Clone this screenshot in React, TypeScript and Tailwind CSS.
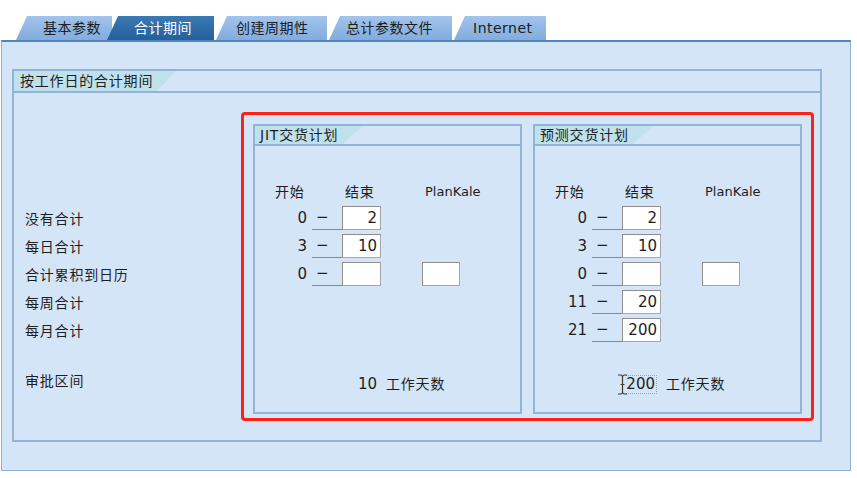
import React from "react";

type Row = { s: string; e: string; pk?: boolean } | null;

const CJK = "text-[14px] tracking-[0.8px]";

function Tab({
  label,
  active,
  cls,
}: {
  label: string;
  active?: boolean;
  cls: string;
}) {
  return (
    <div
      className={
        "h-[24px] flex items-center text-[14px] tracking-[0.5px] whitespace-nowrap [clip-path:polygon(11px_0,100%_0,100%_100%,0_100%)] " +
        (active
          ? "bg-gradient-to-b from-[#3b79b5] to-[#24609b] text-white "
          : "bg-gradient-to-b from-[#a2c4ec] to-[#82acdd] text-[#1c1c1c] ") +
        cls
      }
    >
      {label}
    </div>
  );
}

function Cell({ v, w }: { v: string; w: string }) {
  return (
    <div
      className={
        "h-[24px] bg-white border border-[#a6a6a6] border-t-[#8e8e8e] border-l-[#8e8e8e] flex items-center justify-end pr-[3px] text-[15px] " +
        w
      }
    >
      {v}
    </div>
  );
}

function SubBox({
  title,
  labelCls,
  rows,
  bottom,
  focus,
}: {
  title: string;
  labelCls: string;
  rows: Row[];
  bottom: string;
  focus?: boolean;
}) {
  return (
    <div className="w-[269px] h-[290px] border-2 border-[#93b3d9] flex flex-col">
      <div className="h-[20px] border-b-2 border-[#93b3d9] flex">
        <div
          className={
            "h-full bg-[#bfe1eb] flex items-center pl-[5px] " + CJK + " " + labelCls
          }
        >
          {title}
        </div>
      </div>
      <div className="pt-[36px] flex flex-col">
        <div className="h-[20px] flex items-center pl-[20px]">
          <div className={"w-[70px] " + CJK}>开始</div>
          <div className={"w-[80px] " + CJK}>结束</div>
          <div className="text-[13px]">PlanKale</div>
        </div>
        <div className="mt-[4px] flex flex-col gap-[4px]">
          {rows.map((r, i) =>
            r ? (
              <div key={i} className="h-[24px] flex">
                <div className="w-[52px] text-right text-[15px] self-center">
                  {r.s}
                </div>
                <div className="ml-[5px] w-[30px] h-full border-b border-[#8a8a8a] flex items-center pl-[4px] text-[15px]">
                  −
                </div>
                <Cell v={r.e} w="w-[39px]" />
                {r.pk ? (
                  <div className="ml-[41px]">
                    <Cell v="" w="w-[38px]" />
                  </div>
                ) : null}
              </div>
            ) : (
              <div key={i} className="h-[24px]" />
            )
          )}
        </div>
        <div className="mt-[32px] h-[20px] flex items-center relative">
          <div className="w-[122px] flex justify-end text-[15px]">
            {focus ? (
              <span className="border border-dotted border-[#9aa4ae] border-l-transparent leading-[17px] pr-[1px]">
                {bottom}
              </span>
            ) : (
              <span>{bottom}</span>
            )}
          </div>
          <div className={"ml-[9px] " + CJK}>工作天数</div>
          {focus ? (
            <svg
              className="absolute left-[82px] top-[0px]"
              width="11"
              height="21"
              viewBox="0 0 11 21"
            >
              <path
                d="M1 1 H4 M7 1 H10 M4 1 Q5.5 1.5 5.5 3 V18 Q5.5 19.5 4 20 M7 1 Q5.5 1.5 5.5 3 M5.5 18 Q5.5 19.5 7 20 M1 20 H4 M7 20 H10 M3.5 10.5 H7.5"
                stroke="#3b3b3b"
                strokeWidth="1.2"
                fill="none"
              />
            </svg>
          ) : null}
        </div>
      </div>
    </div>
  );
}

export default function App() {
  const jit: Row[] = [
    { s: "0", e: "2" },
    { s: "3", e: "10" },
    { s: "0", e: "", pk: true },
    null,
    null,
  ];
  const fc: Row[] = [
    { s: "0", e: "2" },
    { s: "3", e: "10" },
    { s: "0", e: "", pk: true },
    { s: "11", e: "20" },
    { s: "21", e: "200" },
  ];
  const labels = ["没有合计", "每日合计", "合计累积到日历", "每周合计", "每月合计"];
  return (
    <div className="w-[857px] h-[478px] bg-white text-[#1e1e1e] font-['DejaVu_Sans','Noto_Sans_CJK_SC',sans-serif] overflow-hidden">
      <div className="h-[40px] pt-[16px] pl-[16px] flex items-end">
        <Tab label="基本参数" cls="w-[96px] pl-[27px]" />
        <Tab label="合计期间" active cls="w-[107px] -ml-[5px] pl-[27px]" />
        <Tab label="创建周期性" cls="w-[111px] ml-[2px] pl-[20px]" />
        <Tab label="总计参数文件" cls="w-[123px] ml-[2px] pl-[17px]" />
        <Tab label="Internet" cls="w-[92px] ml-[2px] pl-[19px]" />
      </div>
      <div className="ml-[1px] w-[850px] h-[431px] bg-[#d4e5f7] border-t-2 border-t-[#5184bd] border-x border-b border-x-[#8fb0d8] border-b-[#8fb0d8] pt-[27px] pl-[10px]">
        <div className="w-[810px] h-[373px] border-2 border-[#93b3d9] flex flex-col">
          <div className="h-[22px] border-b-2 border-[#93b3d9] flex">
            <div
              className={
                "w-[162px] h-full bg-[#bfe1eb] flex items-center pl-[6px] [clip-path:polygon(0_0,162px_0,143px_100%,0_100%)] " +
                CJK
              }
            >
              按工作日的合计期间
            </div>
          </div>
          <div className="flex">
            <div className="w-[227px] pt-[112px] pl-[11px] flex flex-col">
              {labels.map((l) => (
                <div key={l} className={"h-[28px] flex items-center " + CJK}>
                  {l}
                </div>
              ))}
              <div className={"mt-[22px] h-[28px] flex items-center " + CJK}>
                审批区间
              </div>
            </div>
            <div className="mt-[19px] w-[573px] h-[309px] border-[3px] border-[#ff2116] rounded-[4px] pt-[9px] pl-[9px] flex gap-[11px]">
              <SubBox
                title="JIT交货计划"
                labelCls="w-[107px] [clip-path:polygon(0_0,107px_0,88px_100%,0_100%)]"
                rows={jit}
                bottom="10"
              />
              <SubBox
                title="预测交货计划"
                labelCls="w-[118px] [clip-path:polygon(0_0,118px_0,98px_100%,0_100%)]"
                rows={fc}
                bottom="200"
                focus
              />
            </div>
          </div>
        </div>
      </div>
    </div>
  );
}
